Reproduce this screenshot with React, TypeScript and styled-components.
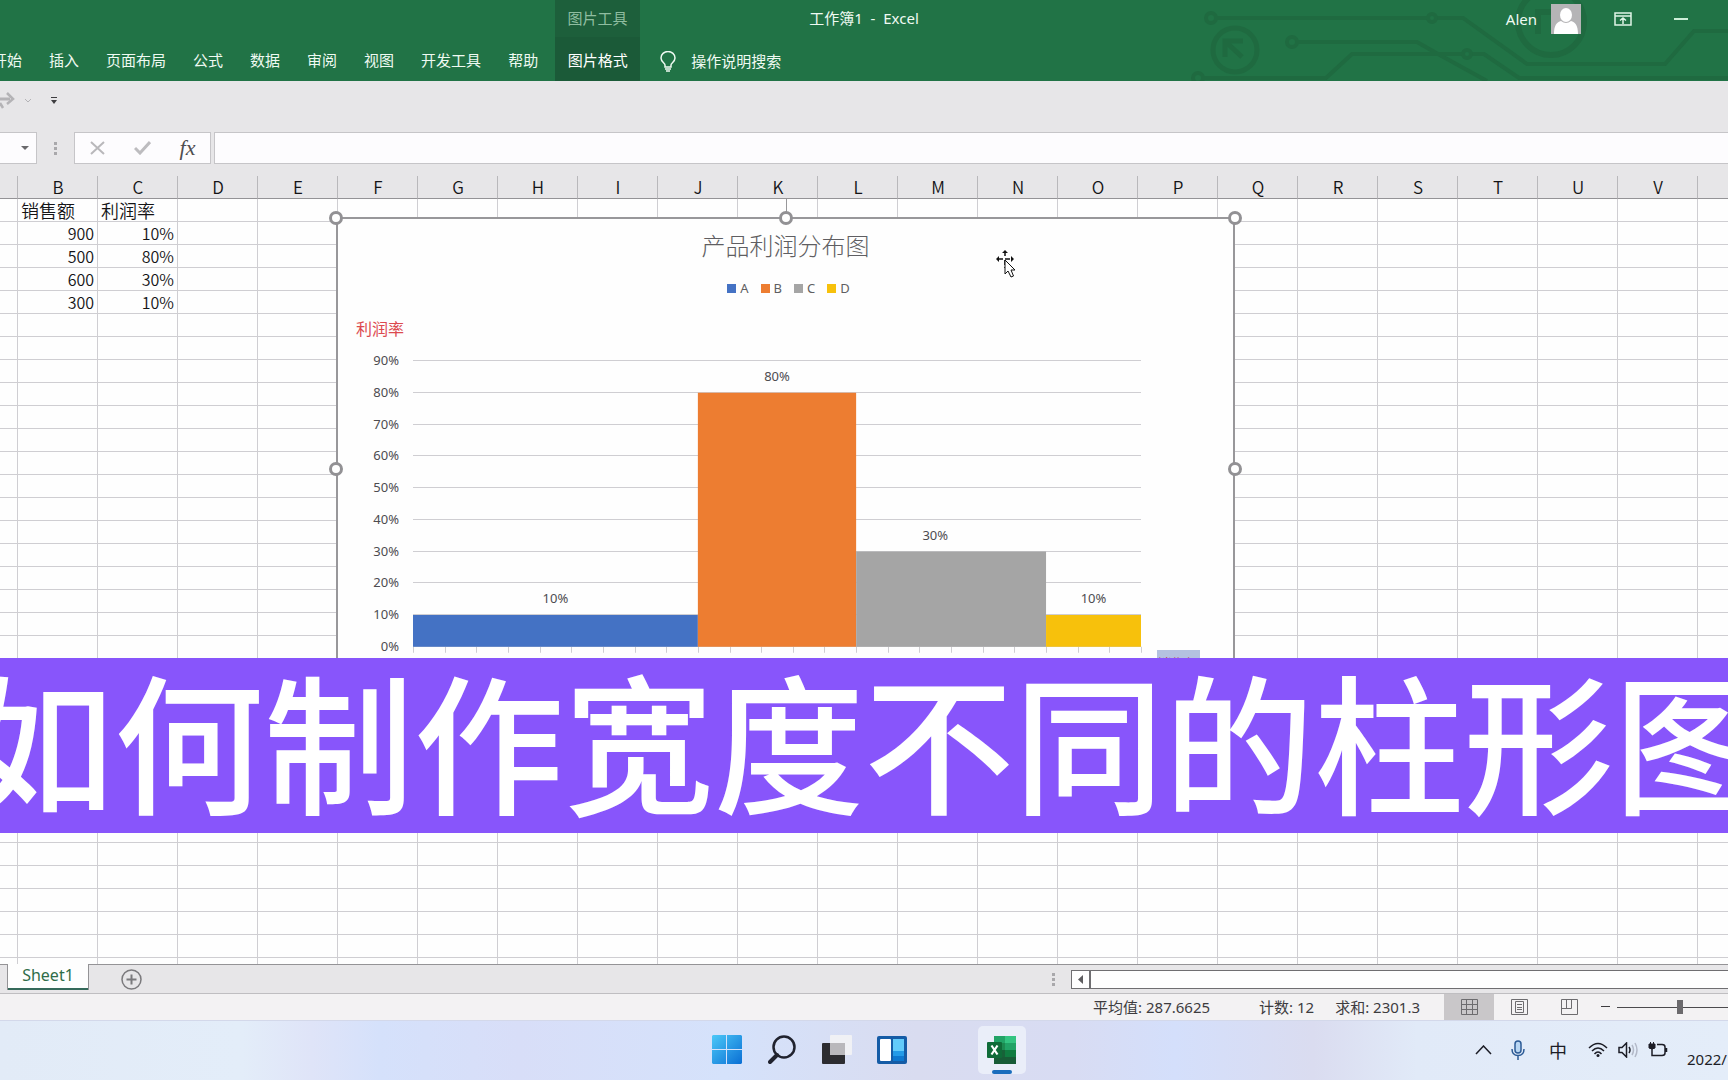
import React from "react";
import styled, { createGlobalStyle } from "styled-components";

const UI = `"Noto Sans", "Noto Sans CJK SC", sans-serif`;
const CJK = `"Noto Sans CJK SC", sans-serif`;

const GlobalStyle = createGlobalStyle`
  * { box-sizing: border-box; }
  body { margin: 0; overflow: hidden; background: #fff; }
  button { border: 0; padding: 0; margin: 0; background: none; font: inherit; color: inherit; }
  svg { display: block; flex: none; }
`;

const Window = styled.div`
  position: relative;
  display: flex;
  flex-direction: column;
  height: 100vh;
  overflow: hidden;
  background: #e7e6e8;
  font-family: ${UI};
  font-size: 15px;
`;

/* ---------- ribbon ---------- */
const Ribbon = styled.header`
  position: relative;
  flex: none;
  background: #217346;
  color: #effaf2;
  line-height: 20px;
`;
const Circuit = styled.svg`
  position: absolute;
  top: 0;
  right: 0;
`;
const TitleRow = styled.div`
  position: relative;
  display: grid;
  grid-template-columns: 1fr auto 1fr;
  height: 37px;
`;
const TitleLeft = styled.div`
  display: flex;
  padding-left: 555px;
`;
const ContextLabel = styled.span`
  width: 85px;
  padding-top: 8px;
  text-align: center;
  font-family: ${CJK};
  background: #1d5f3b;
  color: #8fbda0;
`;
const WindowTitle = styled.h1`
  margin: 0;
  padding-top: 8px;
  font-size: 15px;
  font-weight: 400;
  line-height: 20px;
  white-space: pre;
`;
const TitleRight = styled.div`
  display: flex;
  justify-content: flex-end;
  align-items: center;
  padding-right: 38px;
`;
const Account = styled.button`
  display: flex;
  align-items: center;
  gap: 14px;
  padding-top: 1px;
  margin-right: 33px;
`;
const WindowButton = styled.button`
  display: grid;
  place-items: center;
  width: 18px;
  height: 37px;
  & + & { margin-left: 40px; }
`;
const TabRow = styled.div`
  position: relative;
  display: flex;
  height: 44px;
`;
const Tabs = styled.nav`
  display: flex;
  gap: 27px;
  margin-left: -8px;
  padding-right: 17px;
  font-family: ${CJK};
`;
const Tab = styled.button`
  flex: none;
  height: 44px;
  padding-top: 2px;
  font-family: ${CJK};
`;
const ActiveTab = styled(Tab)`
  width: 85px;
  background: #1b5a38;
  color: #fff;
`;
const TellMe = styled.button`
  display: flex;
  align-items: center;
  gap: 15px;
  padding: 4px 0 0 20px;
  font-family: ${CJK};
`;

/* ---------- quick access + formula bar ---------- */
const QuickBar = styled.div`
  display: flex;
  align-items: center;
  flex: none;
  height: 51px;
  padding-bottom: 12px;
`;
const QuickButton = styled.button<{ $gap?: number }>`
  margin-left: ${(p) => p.$gap ?? 0}px;
`;
const FormulaBar = styled.div`
  display: flex;
  flex: none;
  height: 44px;
  padding-bottom: 12px;
`;
const NameBox = styled.button`
  display: flex;
  align-items: center;
  justify-content: flex-end;
  width: 37px;
  padding-right: 7px;
  background: #fdfcfe;
  border: 1px solid #c6c5c8;
  border-left: 0;
`;
const Grip = styled.div`
  display: grid;
  place-items: center;
  width: 37px;
`;
const FormulaTools = styled.div`
  display: flex;
  width: 137px;
  background: #fdfcfe;
  border: 1px solid #c6c5c8;
`;
const FormulaTool = styled.button`
  display: grid;
  place-items: center;
  flex: 1;
  font: italic 400 22px/28px "Liberation Serif", serif;
  color: #4f4e51;
`;
const FormulaInput = styled.input`
  flex: 1;
  min-width: 0;
  margin-left: 3px;
  padding: 0 6px;
  border: 1px solid #c6c5c8;
  border-right: 0;
  background: #fdfcfe;
  font: 16px ${CJK};
`;

/* ---------- sheet ---------- */
const SheetArea = styled.main`
  position: relative;
  flex: 1 1 0;
  min-height: 0;
  overflow: hidden;
`;
const Grid = styled.table`
  table-layout: fixed;
  border-collapse: separate;
  border-spacing: 0;
  background: #fefefe;
  font-family: ${CJK};
  color: #141416;
  th {
    height: 23px;
    padding: 0 0 0 1px;
    background: #e7e6e8;
    border-right: 1px solid #b9b8bb;
    border-bottom: 1px solid #949396;
    font-size: 17px;
    font-weight: 350;
    line-height: 22px;
  }
`;
const Cell = styled.td<{ $num?: boolean }>`
  height: 23px;
  padding: 0 3px;
  border-right: 1px solid #cfced2;
  border-bottom: 1px solid #cfced2;
  font-size: ${(p) => (p.$num ? 16 : 18)}px;
  font-weight: 350;
  line-height: 22px;
  text-align: ${(p) => (p.$num ? "right" : "left")};
  white-space: nowrap;
`;

/* ---------- picture ---------- */
const Picture = styled.figure`
  position: absolute;
  left: 336px;
  top: 41px;
  width: 899px;
  height: 501px;
  margin: 0;
  box-shadow: inset 0 0 0 2px #98979a;
  background: #fefefe;
  color: #5f5e62;
  display: flex;
  flex-direction: column;
`;
const Handle = styled.i<{ $x: string; $y: string }>`
  position: absolute;
  left: ${(p) => p.$x};
  top: ${(p) => p.$y};
  width: 14px;
  height: 14px;
  margin: -6px -7px;
  border: 3px solid #929194;
  border-radius: 50%;
  background: #fff;
`;
const RotateStem = styled.i`
  position: absolute;
  left: 50%;
  bottom: 100%;
  width: 1px;
  height: 18px;
  background: #98979a;
`;
const ChartTitle = styled.figcaption`
  padding-top: 13px;
  text-align: center;
  font: 300 24px/30px ${CJK};
`;
const Legend = styled.ul`
  display: flex;
  justify-content: center;
  gap: 12px;
  margin: 0;
  padding: 18px 0 0 6px;
  list-style: none;
  font-size: 13px;
  line-height: 20px;
`;
const LegendItem = styled.li<{ $color: string }>`
  display: flex;
  align-items: center;
  gap: 4px;
  &::before {
    content: "";
    width: 9px;
    height: 9px;
    background: ${(p) => p.$color};
  }
`;
const ValueAxisTitle = styled.div`
  padding: 20px 0 0 20px;
  font: 16px/20px ${CJK};
  color: #dc4a50;
`;
const Plot = styled.svg`
  overflow: visible;
  text { font: 13px ${UI}; fill: #4d4c50; }
`;
const CategoryAxisTitle = styled.div`
  align-self: flex-end;
  margin: 6px 35px 0 0;
  padding: 3px 0 2px;
  width: 43px;
  background: #b4c1e0;
  color: #c0405c;
  font: 14px/20px ${CJK};
`;
const Cursor = styled.svg`
  position: absolute;
  left: 660px;
  top: 33px;
`;

const Banner = styled.h2`
  position: absolute;
  left: 0;
  right: 0;
  top: 658px;
  display: flex;
  justify-content: center;
  margin: 0;
  height: 175px;
  overflow: hidden;
  background: #8855fb;
  color: #fff;
  font: 500 150px/159px ${CJK};
  white-space: nowrap;
`;

/* ---------- sheet tabs ---------- */
const SheetBar = styled.div`
  display: flex;
  align-items: center;
  flex: none;
  height: 30px;
  border-top: 1px solid #949396;
  border-bottom: 1px solid #bfbec1;
`;
const SheetTab = styled.button`
  align-self: flex-start;
  width: 82px;
  height: 26px;
  margin: -1px 32px 0 7px;
  padding-bottom: 4px;
  background: #fefefe;
  border: solid #949396;
  border-width: 0 1px;
  box-shadow: inset 0 -2px #35695a;
  color: #2f6d49;
  font-size: 16px;
  line-height: 20px;
`;
const SheetGrip = styled.div`
  margin-left: auto;
`;
const ScrollBar = styled.div`
  display: flex;
  width: 657px;
  height: 19px;
  margin-left: 15px;
  border: 1px solid #6f6e71;
  border-right: 0;
  background: #fefefe;
`;
const ScrollArrow = styled.button`
  display: grid;
  place-items: center;
  width: 19px;
  border-right: 2px solid #6f6e71;
`;

/* ---------- status bar ---------- */
const StatusBar = styled.div`
  display: flex;
  align-items: center;
  justify-content: flex-end;
  flex: none;
  height: 26px;
  overflow: hidden;
  background: #f3f2f3;
  color: #3d3c3f;
  white-space: nowrap;
  line-height: 20px;
`;
const Stat = styled.span<{ $gap: number }>`
  margin-right: ${(p) => p.$gap}px;
`;
const ViewButton = styled.button<{ $on?: boolean }>`
  display: grid;
  place-items: center;
  width: 50px;
  height: 26px;
  background: ${(p) => (p.$on ? "#c9c7c9" : "none")};
`;
const ZoomOut = styled.button`
  width: 9px;
  height: 26px;
  margin: 0 7px;
  display: grid;
  place-items: center;
`;
const ZoomTrack = styled.div`
  width: 111px;
  overflow: hidden;
`;
const ZoomSlider = styled.input`
  display: block;
  width: 126px;
  height: 26px;
  margin: 0;
  appearance: none;
  background: linear-gradient(#4c4b4e, #4c4b4e) center / 100% 1px no-repeat;
  &::-webkit-slider-thumb {
    appearance: none;
    width: 6px;
    height: 14px;
    background: #6b6a6d;
  }
`;

/* ---------- taskbar ---------- */
const TaskBar = styled.footer`
  display: grid;
  grid-template-columns: 1fr auto 1fr;
  flex: none;
  height: 60px;
  border-top: 1px solid #d3d8ea;
  background: linear-gradient(90deg, #e2ebf7 0%, #e3edf9 14%, #dfe4f8 18%, #d5e1fb 22%, #d8def8 30%, #d5e2fb 42%, #d9dcf0 53%, #d8dcf3 62%, #d4dffb 68%, #dadcf0 76%, #e1eaf8 82%, #e4edf9 100%);
  color: #1c1d26;
`;
const Apps = styled.div`
  grid-column: 2;
  display: flex;
  align-items: center;
  gap: 7px;
  padding-bottom: 1px;
`;
const AppButton = styled.button<{ $open?: boolean }>`
  position: relative;
  display: grid;
  place-items: center;
  width: 48px;
  height: 48px;
  border-radius: 5px;
  background: ${(p) => (p.$open ? "#eaeef9" : "none")};
  margin-left: ${(p) => (p.$open ? 55 : 0)}px;
`;
const OpenMark = styled.i`
  position: absolute;
  bottom: 0;
  left: 14px;
  width: 20px;
  height: 4px;
  border-radius: 2px;
  background: #1a6dbd;
`;
const Tray = styled.div`
  display: flex;
  align-items: center;
  justify-content: flex-end;
  overflow: hidden;
  padding-bottom: 2px;
`;
const TrayButton = styled.button<{ $w: number }>`
  display: grid;
  place-items: center;
  width: ${(p) => p.$w}px;
  height: 48px;
  font: 18px/24px ${CJK};
`;
const Clock = styled.time`
  width: 41px;
  margin-left: 11px;
  padding-top: 18px;
  overflow: hidden;
  white-space: nowrap;
  line-height: 20px;
`;

const COLUMNS = "BCDEFGHIJKLMNOPQRSTUVWXYZ".split("");
const DATA = [
  ["销售额", "利润率"],
  ["900", "10%"],
  ["500", "80%"],
  ["600", "30%"],
  ["300", "10%"],
];
const ROWS = Array.from({ length: 40 }, (_, i) => DATA[i] ?? []);
const TABS = ["开始", "插入", "页面布局", "公式", "数据", "审阅", "视图", "开发工具", "帮助"];

/* labelAt: which unit of the series carries its data label */
const SERIES = [
  { name: "A", units: 9, value: 10, labelAt: 4.5, color: "#4472c4" },
  { name: "B", units: 5, value: 80, labelAt: 2.5, color: "#ed7d31" },
  { name: "C", units: 6, value: 30, labelAt: 2.5, color: "#a5a5a5" },
  { name: "D", units: 3, value: 10, labelAt: 1.5, color: "#f7c10c" },
];

const PLOT = { left: 77, top: 23, step: 31.75, width: 728, units: 23 };

function ColumnPlot() {
  const unit = PLOT.width / PLOT.units;
  const base = PLOT.top + PLOT.step * 9;
  let used = 0;
  const bars = SERIES.map((s) => {
    const x = PLOT.left + used * unit;
    used += s.units;
    return { ...s, x, w: s.units * unit, y: base - (s.value / 10) * PLOT.step };
  });
  return (
    <Plot width="899" height="306" role="img" aria-label="产品利润分布图">
      {Array.from({ length: 10 }, (_, i) => {
        const y = Math.round(PLOT.top + i * PLOT.step);
        return (
          <g key={i}>
            <rect x={PLOT.left} y={y - 1} width={PLOT.width} height="1" fill="#cfced2" />
            <text x="63" y={y + 4} textAnchor="end">{`${90 - i * 10}%`}</text>
          </g>
        );
      })}
      {Array.from({ length: PLOT.units + 1 }, (_, i) => (
        <rect key={i} x={Math.round(PLOT.left + i * unit)} y={base} width="1" height="6" fill="#cfced2" />
      ))}
      {bars.map((b) => (
        <g key={b.name}>
          <rect x={b.x} y={b.y} width={b.w} height={base - b.y} fill={b.color} />
          <text x={b.x + b.labelAt * unit} y={b.y - 12} textAnchor="middle">{`${b.value}%`}</text>
        </g>
      ))}
    </Plot>
  );
}

const Dots = () => (
  <svg width="4" height="13" fill="#a9a8ab">
    <rect width="3" height="3" />
    <rect y="5" width="3" height="3" />
    <rect y="10" width="3" height="3" />
  </svg>
);

export default function App() {
  return (
    <Window>
      <GlobalStyle />
      <Ribbon>
        <Circuit width="576" height="81" fill="none" stroke="#1f6a40" strokeWidth="4">
          <circle cx="59" cy="18" r="5" />
          <path d="M64 18H275M285 18H311L375 64H513L542 31H576" />
          <circle cx="280" cy="18" r="4" />
          <circle cx="83" cy="50" r="22" strokeWidth="5" />
          <path d="M73 57V41H91M74 42L90 57" strokeWidth="5" />
          <circle cx="140" cy="42" r="5" />
          <path d="M145 42H265L286 54L335 81" />
          <circle cx="46" cy="78" r="5" />
          <path d="M51 78H174L200 54H310M320 54H332L367 78H576" />
          <circle cx="315" cy="54" r="4" />
          <circle cx="399" cy="22" r="33" strokeWidth="6" />
          <path d="M386 34V12H410" strokeWidth="6" />
        </Circuit>
        <TitleRow>
          <TitleLeft>
            <ContextLabel>图片工具</ContextLabel>
          </TitleLeft>
          <WindowTitle>{"工作簿1  -  Excel"}</WindowTitle>
          <TitleRight>
            <Account>
              Alen
              <svg width="30" height="30" viewBox="0 0 30 30">
                <rect width="30" height="30" fill="#b5b4b6" />
                <ellipse cx="15" cy="11" rx="6" ry="7" fill="#fff" />
                <path d="M3 30C3 21 6 18 10 17Q15 21 20 17C24 18 27 21 27 30Z" fill="#fff" />
              </svg>
            </Account>
            <WindowButton aria-label="功能区显示选项">
              <svg width="18" height="14" viewBox="0 0 18 14" fill="none" stroke="#dff5e6" strokeWidth="1.5">
                <path d="M1 1H17V13H1ZM1 4H17M9 12V6M6 8.5L9 6L12 8.5" />
              </svg>
            </WindowButton>
            <WindowButton aria-label="最小化">
              <svg width="14" height="2"><rect width="14" height="2" fill="#cdeed8" /></svg>
            </WindowButton>
          </TitleRight>
        </TitleRow>
        <TabRow>
          <Tabs>
            {TABS.map((t) => (
              <Tab key={t}>{t}</Tab>
            ))}
          </Tabs>
          <ActiveTab>图片格式</ActiveTab>
          <TellMe>
            <svg width="16" height="21" viewBox="0 0 16 21" fill="none" stroke="#effaf2" strokeWidth="1.5">
              <path d="M5 16V14C5 12 1 11 1 7A7 6.5 0 0 1 15 7C15 11 11 12 11 14V16ZM5 18H11M6 20H10" />
            </svg>
            操作说明搜索
          </TellMe>
        </TabRow>
      </Ribbon>

      <QuickBar>
        <QuickButton aria-label="恢复">
          <svg width="15" height="18" viewBox="0 0 15 18" fill="none" stroke="#b4b3b6" strokeWidth="3">
            <path d="M0 7H10" />
            <path d="M7 1L13 7L7 12" strokeWidth="2.5" />
            <path d="M0 11L3 16" strokeWidth="2.5" />
          </svg>
        </QuickButton>
        <QuickButton aria-label="恢复列表" $gap={10}>
          <svg width="6" height="4" fill="none" stroke="#b4b3b6"><path d="M0 0L3 3L6 0" /></svg>
        </QuickButton>
        <QuickButton aria-label="自定义快速访问工具栏" $gap={20}>
          <svg width="6" height="7" fill="#3e3d40"><path d="M0 0H6V1H0ZM0 3H6L3 7Z" /></svg>
        </QuickButton>
      </QuickBar>

      <FormulaBar>
        <NameBox aria-label="名称框">
          <svg width="8" height="4" fill="#6a696c"><path d="M0 0H8L4 4Z" /></svg>
        </NameBox>
        <Grip><Dots /></Grip>
        <FormulaTools>
          <FormulaTool aria-label="取消">
            <svg width="15" height="14" fill="none" stroke="#b9b8bb" strokeWidth="2"><path d="M1 1L14 13M14 1L1 13" /></svg>
          </FormulaTool>
          <FormulaTool aria-label="输入">
            <svg width="17" height="14" fill="none" stroke="#bdbcbf" strokeWidth="3"><path d="M1 7L6 12L16 1" /></svg>
          </FormulaTool>
          <FormulaTool aria-label="插入函数"><span>fx</span></FormulaTool>
        </FormulaTools>
        <FormulaInput aria-label="编辑栏" />
      </FormulaBar>

      <SheetArea>
        <Grid style={{ width: 18 + COLUMNS.length * 80 }}>
          <colgroup>
            <col style={{ width: 18 }} />
            {COLUMNS.map((c) => (
              <col key={c} style={{ width: 80 }} />
            ))}
          </colgroup>
          <thead>
            <tr>
              <th aria-label="A" />
              {COLUMNS.map((c) => (
                <th key={c}>{c}</th>
              ))}
            </tr>
          </thead>
          <tbody>
            {ROWS.map((row, r) => (
              <tr key={r}>
                <Cell />
                {COLUMNS.map((c, i) => (
                  <Cell key={c} $num={r > 0}>{row[i]}</Cell>
                ))}
              </tr>
            ))}
          </tbody>
        </Grid>
        <Picture>
          <ChartTitle>产品利润分布图</ChartTitle>
          <Legend>
            {SERIES.map((s) => (
              <LegendItem key={s.name} $color={s.color}>{s.name}</LegendItem>
            ))}
          </Legend>
          <ValueAxisTitle>利润率</ValueAxisTitle>
          <ColumnPlot />
          <CategoryAxisTitle>销售额</CategoryAxisTitle>
          <RotateStem />
          <Handle $x="0%" $y="0%" />
          <Handle $x="50%" $y="0%" />
          <Handle $x="100%" $y="0%" />
          <Handle $x="0%" $y="50%" />
          <Handle $x="100%" $y="50%" />
          <Handle $x="0%" $y="100%" />
          <Handle $x="50%" $y="100%" />
          <Handle $x="100%" $y="100%" />
          <Cursor width="20" height="28" viewBox="0 0 20 28">
            <path d="M9 1V8M2 9H16M9 10V18" stroke="#111" strokeWidth="1.5" strokeDasharray="5 2" />
            <path d="M9 0L12 3H6ZM0 9L3 6V12ZM18 9L15 6V12Z" fill="#111" />
            <path d="M9 10V24L12 21L15 27L17.500 26L15 20H19Z" fill="#fff" stroke="#111" />
          </Cursor>
        </Picture>
      </SheetArea>

      <SheetBar>
        <SheetTab>Sheet1</SheetTab>
        <button aria-label="新工作表">
          <svg width="21" height="21" viewBox="0 0 21 21" fill="none" stroke="#7b7a7d">
            <circle cx="10.500" cy="10.500" r="9.500" strokeWidth="1.500" />
            <path d="M10.500 5.500V15.500M5.500 10.500H15.500" strokeWidth="2" />
          </svg>
        </button>
        <SheetGrip><Dots /></SheetGrip>
        <ScrollBar>
          <ScrollArrow aria-label="向左滚动">
            <svg width="5" height="9" fill="#5d5c5f"><path d="M5 0V9L0 4.500Z" /></svg>
          </ScrollArrow>
        </ScrollBar>
      </SheetBar>

      <StatusBar>
        <Stat $gap={49}>平均值: 287.6625</Stat>
        <Stat $gap={21}>计数: 12</Stat>
        <Stat $gap={24}>求和: 2301.3</Stat>
        <ViewButton $on aria-label="普通">
          <svg width="17" height="16" fill="none" stroke="#6d6c6f">
            <path d="M.5 .5H16.500V15.500H.5ZM.5 5.500H16.500M.5 10.500H16.500M5.500 .5V15.500M11.500 .5V15.500" />
          </svg>
        </ViewButton>
        <ViewButton aria-label="页面布局">
          <svg width="17" height="16" fill="none" stroke="#6d6c6f">
            <path d="M.5 .5H16.500V15.500H.5ZM4.500 2.500H12.500V13.500H4.500ZM6 5.500H11M6 8.500H11M6 10.500H11" />
          </svg>
        </ViewButton>
        <ViewButton aria-label="分页预览">
          <svg width="17" height="16" fill="none" stroke="#6d6c6f">
            <path d="M.5 .5H16.500V15.500H.5ZM5.500 .5V9.500M10.500 .5V9.500M.5 9.500H10.500" />
          </svg>
        </ViewButton>
        <ZoomOut aria-label="缩小">
          <svg width="9" height="2"><rect width="9" height="1" fill="#3d3c3f" /></svg>
        </ZoomOut>
        <ZoomTrack>
          <ZoomSlider type="range" aria-label="显示比例" defaultValue={50} />
        </ZoomTrack>
      </StatusBar>

      <TaskBar>
        <Apps>
          <AppButton aria-label="开始">
            <svg width="30" height="30" viewBox="0 0 30 30">
              <defs>
                <linearGradient id="win" x1="0" y1="0" x2="1" y2="1">
                  <stop stopColor="#4cc8f8" />
                  <stop offset="1" stopColor="#0a6fd4" />
                </linearGradient>
              </defs>
              <path d="M1 0H14V14H0V1ZM15 0H29L30 1V14H15ZM0 15H14V29H1L0 28ZM15 15H30V28L29 29H15Z" fill="url(#win)" />
            </svg>
          </AppButton>
          <AppButton aria-label="搜索">
            <svg width="28" height="30" viewBox="0 0 28 30" fill="none" stroke="#20222e" strokeLinecap="round">
              <circle cx="16" cy="12" r="10.500" strokeWidth="2.500" />
              <path d="M9 20L2 27" strokeWidth="4" />
            </svg>
          </AppButton>
          <AppButton aria-label="任务视图">
            <svg width="30" height="30" viewBox="0 0 30 30">
              <rect y="8" width="23" height="21" rx="1" fill="#2c2c30" />
              <rect x="8" width="22" height="20" rx="1" fill="#f3f3f5" fillOpacity=".9" />
              <path d="M8 8H23V20H8Z" fill="#b9b8bc" />
            </svg>
          </AppButton>
          <AppButton aria-label="小组件">
            <svg width="30" height="28" viewBox="0 0 30 28">
              <rect width="30" height="28" rx="2" fill="#155ca6" />
              <rect x="3" y="3" width="11" height="22" rx="1" fill="#fff" />
              <path d="M16 3H27V15H16Z" fill="#62cbfa" />
              <path d="M16 15H27V20H16Z" fill="#239be8" />
              <path d="M16 20H27V25H16Z" fill="#0d78d0" />
            </svg>
          </AppButton>
          <AppButton $open aria-label="Excel">
            <svg width="30" height="28" viewBox="0 0 30 28">
              <rect x="7" width="22" height="28" rx="1" fill="#1c8a50" />
              <path d="M18 0H29V7H18Z" fill="#33c481" />
              <path d="M7 0H18V7H7Z" fill="#21a366" />
              <path d="M18 7H29V14H18Z" fill="#21a366" />
              <path d="M7 14H18V28H7Z" fill="#176238" />
              <path d="M18 14H29V21H18Z" fill="#107c41" />
              <path d="M7 21H29V28H7Z" fill="#185c37" />
              <rect y="6" width="15" height="16" rx="1" fill="#0f6b38" />
              <path d="M4.500 9.500L10.500 18.500M10.500 9.500L4.500 18.500" stroke="#fff" strokeWidth="2.200" />
            </svg>
            <OpenMark />
          </AppButton>
        </Apps>
        <Tray>
          <TrayButton $w={34} aria-label="显示隐藏的图标">
            <svg width="17" height="10" fill="none" stroke="#1c1d26" strokeWidth="1.500"><path d="M1 9L8.500 1L16 9" /></svg>
          </TrayButton>
          <TrayButton $w={36} aria-label="麦克风">
            <svg width="14" height="20" viewBox="0 0 14 20" fill="none" stroke="#2c5b96" strokeWidth="1.500">
              <rect x="4" y="1" width="6" height="12" rx="3" fill="#b9d6f2" />
              <path d="M1 9Q1 15.500 7 15.500T13 9M7 16V20" />
            </svg>
          </TrayButton>
          <TrayButton $w={44}>中</TrayButton>
          <TrayButton $w={36} aria-label="网络">
            <svg width="20" height="16" viewBox="0 0 20 16" fill="none" stroke="#1c1d26" strokeWidth="1.500">
              <path d="M1 6Q10 -3 19 6M4 9Q10 3 16 9M6.500 12Q10 8 13.500 12" />
              <circle cx="10" cy="13.500" r="1.500" fill="#1c1d26" stroke="none" />
            </svg>
          </TrayButton>
          <TrayButton $w={24} aria-label="音量">
            <svg width="20" height="16" viewBox="0 0 20 16" fill="none" stroke="#1c1d26" strokeWidth="1.500">
              <path d="M1 5.500H4L8.500 1V15L4 10.500H1ZM11 5Q13 8 11 11" />
              <path d="M14 3Q17 8 14 13M17 1Q21 8 17 15" stroke="#b3b9c8" />
            </svg>
          </TrayButton>
          <TrayButton $w={36} aria-label="电源">
            <svg width="20" height="16" viewBox="0 0 20 16" fill="none" stroke="#1c1d26" strokeWidth="1.500">
              <path d="M9 2.500H14Q17 2.500 17 5V11Q17 13.500 14 13.500H4V6M18.500 6V10" />
              <path d="M1 2H7V6Q4 8 1 6ZM2.500 0V2M5.500 0V2" fill="#1c1d26" strokeWidth="1" />
            </svg>
          </TrayButton>
          <Clock>2022/1</Clock>
        </Tray>
      </TaskBar>

      <Banner>如何制作宽度不同的柱形图</Banner>
    </Window>
  );
}
